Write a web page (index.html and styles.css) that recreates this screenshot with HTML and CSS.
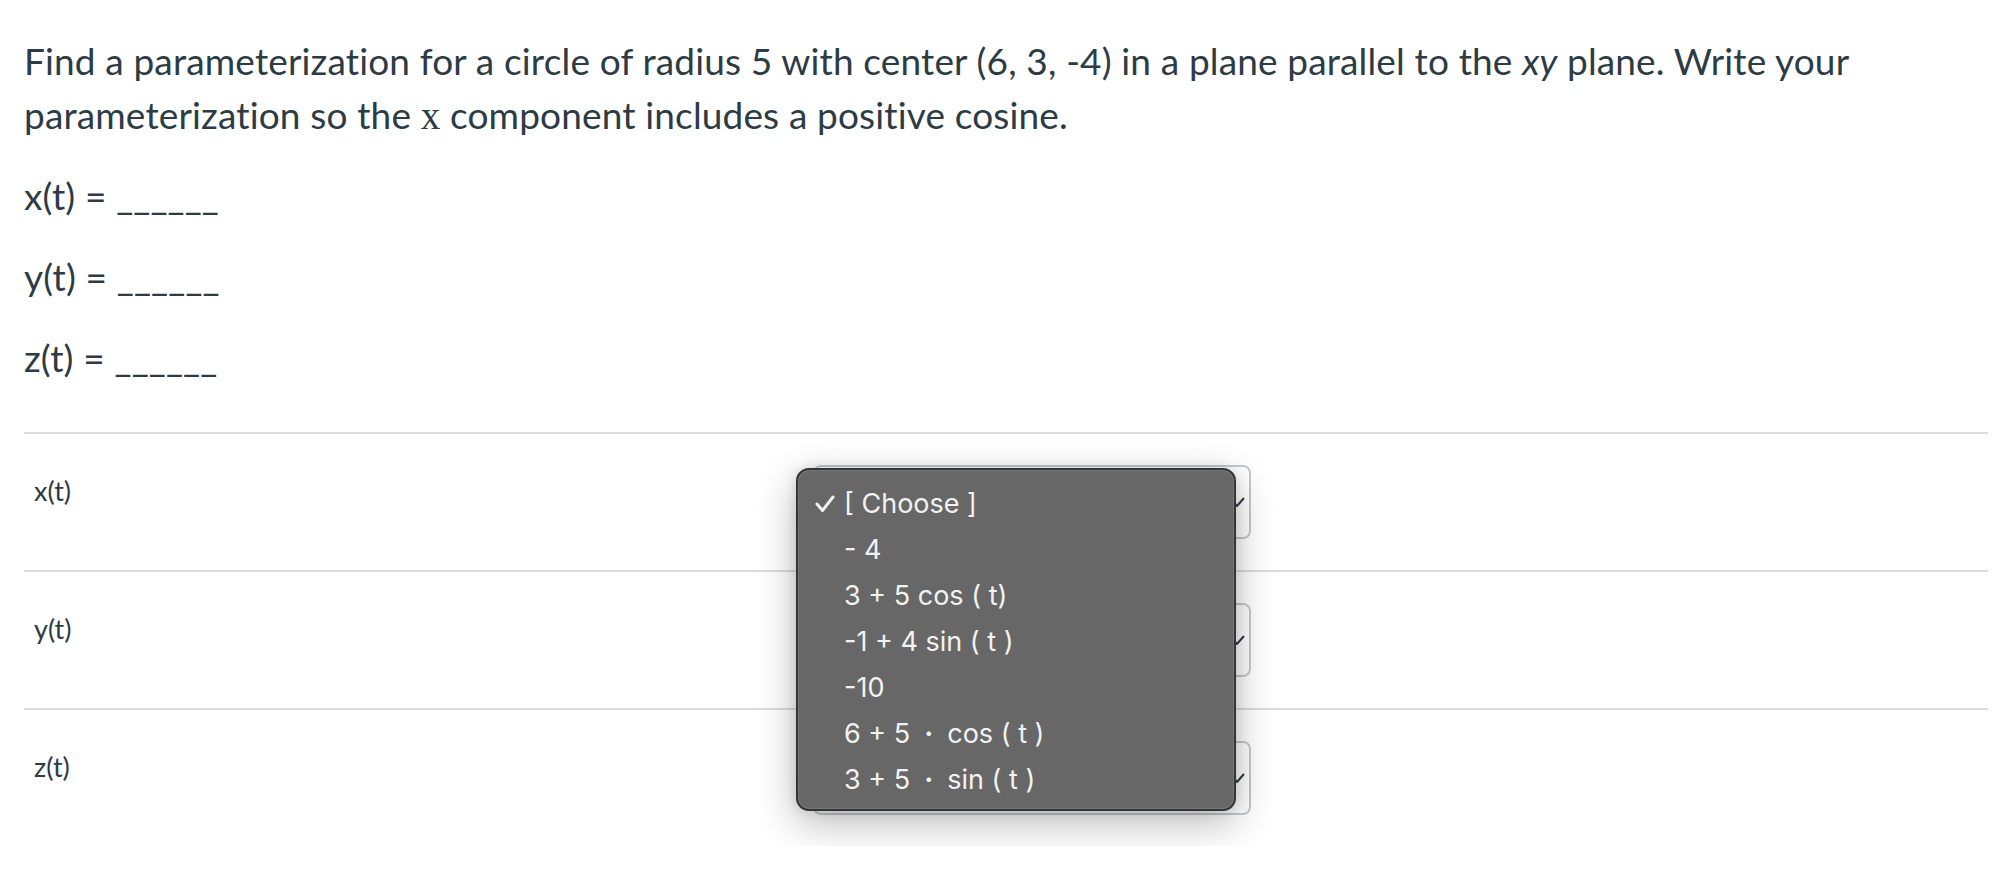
FILE: index.html
```html
<!DOCTYPE html>
<html lang="en">
<head>
<meta charset="utf-8">
<title>Quiz question</title>
<link rel="stylesheet" href="styles.css">
</head>
<body>
<div class="question">
  <div class="question-text">
    <p>Find a parameterization for a circle of radius 5 with center (6, 3, -4) in a plane parallel to the <em>xy</em> plane. Write your parameterization so the <span class="math">x</span> component includes a positive cosine.</p>
    <p>x(t) = ______</p>
    <p>y(t) = ______</p>
    <p class="last">z(t) = ______</p>
  </div>
  <div class="answers">
    <div class="answer-row">
      <div class="answer-label">x(t)</div>
      <div class="select-wrap">
        <div class="select">
          <svg class="chevron" width="16" height="10" viewBox="0 0 16 10"><path d="M1 1 L8 9 L15 1" fill="none" stroke="#2d3b45" stroke-width="2"/></svg>
        </div>
        <div class="popup">
          <div class="option selected"><svg class="check" width="20" height="18" viewBox="0 0 20 18"><path d="M2 9 L7.5 15.5 L18 2" fill="none" stroke="#f0f0f0" stroke-width="3" stroke-linecap="round" stroke-linejoin="round"/></svg>[ Choose ]</div>
          <div class="option">- 4</div>
          <div class="option">3 + 5 cos ( t)</div>
          <div class="option">-1 + 4 sin ( t )</div>
          <div class="option">-10</div>
          <div class="option">6 + 5<span class="dot">·</span>cos ( t )</div>
          <div class="option">3 + 5<span class="dot">·</span>sin ( t )</div>
        </div>
      </div>
    </div>
    <div class="answer-row">
      <div class="answer-label">y(t)</div>
      <div class="select-wrap">
        <div class="select">
          <svg class="chevron" width="16" height="10" viewBox="0 0 16 10"><path d="M1 1 L8 9 L15 1" fill="none" stroke="#2d3b45" stroke-width="2"/></svg>
        </div>
      </div>
    </div>
    <div class="answer-row">
      <div class="answer-label">z(t)</div>
      <div class="select-wrap">
        <div class="select">
          <svg class="chevron" width="16" height="10" viewBox="0 0 16 10"><path d="M1 1 L8 9 L15 1" fill="none" stroke="#2d3b45" stroke-width="2"/></svg>
        </div>
      </div>
    </div>
  </div>
</div>
</body>
</html>
```
FILE: styles.css
```css
html, body {
  margin: 0;
  padding: 0;
  background: #ffffff;
}

body {
  font-family: Lato, "Liberation Sans", sans-serif;
  color: #2d3b45;
}

.question {
  padding: 34px 16px 0 24px;
}

.question-text p {
  margin: 0 0 27px 0;
  font-size: 37px;
  line-height: 54px;
  letter-spacing: 0.15px;
}

.question-text p.last {
  margin-bottom: 0;
}

.question-text em {
  font-style: italic;
}

.math {
  font-family: "Liberation Serif", "Times New Roman", serif;
  font-size: 39px;
  line-height: 1;
}

.answers {
  margin-top: 47px;
}

.answer-row {
  border-top: 2px solid #dadcde;
  padding: 31px 0 31px 0;
  display: grid;
  grid-template-columns: 789px 438px;
}

.answer-label {
  font-size: 27px;
  line-height: 40px;
  padding: 6px 0 0 10px;
}

.select-wrap {
  position: relative;
}

.select {
  box-sizing: border-box;
  height: 74px;
  border: 2px solid #c7cacd;
  border-radius: 8px;
  background: #ffffff;
  display: flex;
  align-items: center;
  justify-content: flex-end;
  padding-right: 4px;
}

.chevron {
  display: block;
}

.popup {
  position: absolute;
  z-index: 10;
  left: -17px;
  top: 3px;
  width: 440px;
  height: 343px;
  box-sizing: border-box;
  padding: 10px 0;
  background: #676767;
  border: 2px solid #353535;
  border-radius: 13px;
  box-shadow: inset 0 0 0 1px rgba(255, 255, 255, 0.1), 0 12px 40px rgba(0, 0, 0, 0.28), 0 0 12px rgba(0, 0, 0, 0.12);
  font-family: Inter, "Noto Sans", sans-serif;
  color: #f2f2f2;
}

.option {
  position: relative;
  height: 46px;
  display: flex;
  align-items: center;
  padding-left: 46px;
  font-size: 27px;
  white-space: nowrap;
}

.check {
  position: absolute;
  left: 17px;
  top: 15px;
}

.dot {
  padding: 0 14px;
  font-weight: 700;
}
```
